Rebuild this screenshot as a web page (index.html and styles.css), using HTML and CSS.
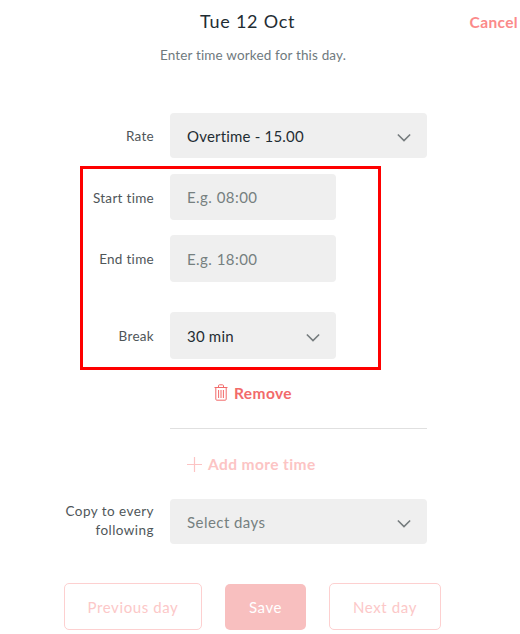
FILE: index.html
```html
<!DOCTYPE html>
<html lang="en">
<head>
<meta charset="utf-8">
<title>Tue 12 Oct</title>
<link rel="stylesheet" href="styles.css">
</head>
<body>
<main class="page">
  <header class="header">
    <h1 class="title">Tue 12 Oct</h1>
    <a class="cancel">Cancel</a>
  </header>
  <p class="subtitle">Enter time worked for this day.</p>

  <div class="row row-rate">
    <label class="label">Rate</label>
    <div class="field wide value">Overtime - 15.00
      <svg class="chev" viewBox="0 0 16 10"><path d="M1 1.5 8 8.5 15 1.5"/></svg>
    </div>
  </div>

  <div class="row row-start">
    <label class="label">Start time</label>
    <div class="field narrow placeholder">E.g. 08:00</div>
  </div>
  <div class="row row-end">
    <label class="label">End time</label>
    <div class="field narrow tall placeholder">E.g. 18:00</div>
  </div>
  <div class="row row-break">
    <label class="label">Break</label>
    <div class="field narrow tall value">30 min
      <svg class="chev" viewBox="0 0 16 10"><path d="M1 1.5 8 8.5 15 1.5"/></svg>
    </div>
  </div>

  <div class="remove-wrap">
    <a class="remove">
      <svg class="trash" viewBox="0 0 14 17"><path d="M.5 3.500h13M4.500 3.500V1.800a1 1 0 0 1 1-1h3a1 1 0 0 1 1 1v1.700M1.800 3.500v11.700a1 1 0 0 0 1 1h8.400a1 1 0 0 0 1-1V3.500M4.600 6v8M7 6v8M9.400 6v8"/></svg>
      Remove
    </a>
  </div>

  <div class="indent"><hr class="divider"></div>

  <div class="indent add-wrap">
    <a class="add">
      <svg class="plus" viewBox="0 0 15 15"><path d="M7.500 0v15M0 7.500h15"/></svg>
      Add more time
    </a>
  </div>

  <div class="row row-copy">
    <label class="label two">Copy to every following</label>
    <div class="field wide placeholder">Select days
      <svg class="chev" viewBox="0 0 16 10"><path d="M1 1.5 8 8.5 15 1.5"/></svg>
    </div>
  </div>

  <div class="actions">
    <button class="btn outline prev">Previous day</button>
    <button class="btn save">Save</button>
    <button class="btn outline next">Next day</button>
  </div>

  <div class="annotation"></div>
</main>
</body>
</html>
```

FILE: styles.css
```css
* { box-sizing: border-box; }
html, body { margin: 0; padding: 0; background: #fff; }
body { font-family: "Lato", "Open Sans", sans-serif; overflow: hidden; }

.page { position: relative; width: 520px; height: 634px; padding-top: 10px; }

.header {
  display: grid;
  grid-template-columns: 200px 1fr auto;
  align-items: center;
  height: 23px;
  padding-right: 2px;
}
.title { grid-column: 2; margin: 0; font-size: 18px; font-weight: 400; color: #1f2d33; letter-spacing: 0.75px; line-height: 23px; }
.cancel { font-size: 15.5px; font-weight: 700; color: #fb8a8a; letter-spacing: 0.35px; }

.subtitle {
  width: 506px;
  margin: 12px 0 0;
  text-align: center;
  font-size: 13.5px;
  line-height: 20px;
  color: #6f7a7e;
  letter-spacing: 0.16px;
}

.row { display: grid; grid-template-columns: 154px auto; column-gap: 16px; align-items: center; justify-content: start; }
.row-rate { margin-top: 48px; }
.row-start { margin-top: 16px; }
.row-end { margin-top: 15px; }
.row-break { margin-top: 30px; }
.row-copy { margin-top: 25px; }

.label { padding-top: 2px; text-align: right; font-size: 13.5px; line-height: 19px; color: #4f5659; letter-spacing: 0.3px; }
.label.two { padding: 0 0 2px 56px; letter-spacing: 0.45px; }

.field {
  display: flex;
  align-items: center;
  justify-content: space-between;
  height: 46px;
  padding: 0 16px 0 17px;
  background: #efefef;
  border-radius: 4px;
  font-size: 15px;
}
.wide { width: 257px; height: 45px; }
.narrow { width: 166px; }
.tall { height: 47px; }
.value { color: #1f2d33; letter-spacing: 0.2px; }
.placeholder { color: #76807f; letter-spacing: 0.45px; }

.chev { width: 14px; height: 9px; margin-top: 4px; flex: none; }
.chev path { fill: none; stroke: #757b7d; stroke-width: 1.8; }

.remove-wrap { display: flex; justify-content: center; width: 506px; margin-top: 24px; }
.remove { display: flex; align-items: center; gap: 6px; height: 20px; font-size: 15.5px; font-weight: 700; color: #f26a6a; letter-spacing: 0.4px; }
.trash { width: 14px; height: 17px; margin-top: -2px; }
.trash path { fill: none; stroke: #f26a6a; stroke-width: 1; }

.indent { padding-left: 170px; }
.divider { width: 257px; height: 1px; margin: 25px 0 0; border: 0; background: #e0e0e0; }

.add-wrap { margin-top: 25px; padding-left: 187px; }
.add { display: flex; align-items: center; gap: 6px; height: 20px; font-size: 15.5px; font-weight: 700; color: #fcc4c4; letter-spacing: 0.4px; }
.plus { width: 15px; height: 15px; }
.plus path { fill: none; stroke: #fcc4c4; stroke-width: 1.2; }

.actions { display: flex; align-items: center; gap: 23px; margin: 39px 0 0 64px; }
.btn {
  height: 47px;
  border-radius: 5px;
  font-family: inherit;
  font-size: 15px;
  letter-spacing: 0.6px;
  padding: 0;
}
.outline { background: #fff; border: 1px solid #fdd0d0; color: #fcc8c8; }
.prev { width: 138px; }
.next { width: 112px; }
.save { width: 81px; height: 46px; border: 0; background: #f8bfbf; color: #fff; }

.annotation {
  position: absolute;
  left: 80px;
  top: 166px;
  width: 301px;
  height: 204px;
  border: 3px solid #fe0000;
}
```
